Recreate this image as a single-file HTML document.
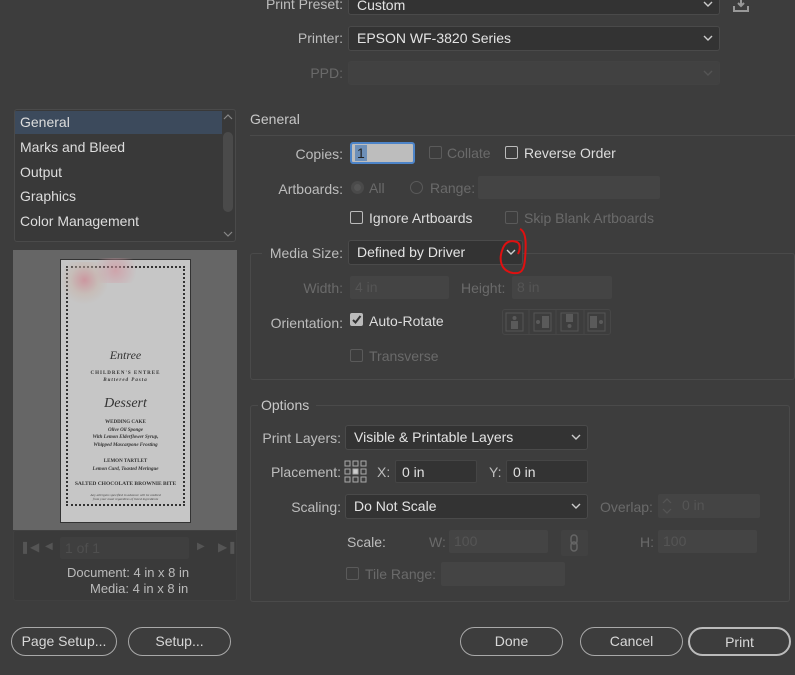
<!DOCTYPE html>
<html><head><meta charset="utf-8"><style>
*{margin:0;padding:0;box-sizing:border-box}
body{width:795px;height:675px;background:#3d3d3d;font-family:"Liberation Sans",sans-serif;font-size:14px;color:#d0d0d0;position:relative;overflow:hidden}
.a{position:absolute;white-space:nowrap}
.lbl{position:absolute;text-align:right;color:#bdbdbd;font-size:14px}
.dis{color:#6a6a6a}
.dd{position:absolute;background:#333;border:1px solid #4a4a4a;border-radius:3px;color:#e4e4e4;padding-left:8px;line-height:23px}
.dd svg{position:absolute;right:6px;top:8px}
.in{position:absolute;background:#333;border:1px solid #454545;border-radius:2px;color:#e0e0e0;padding-left:6px;line-height:22px}
.din{position:absolute;background:#444;border-radius:2px;color:#555;padding-left:5px;line-height:22px}
.cb{position:absolute;width:13px;height:13px;border:1px solid #bbb;border-radius:2px}
.cb.d{border-color:#5a5a5a}
.btn{position:absolute;height:29px;border:1.5px solid #a9a9a9;border-radius:15px;text-align:center;line-height:26px;color:#d8d8d8;font-size:14px}
.box{position:absolute;border:1px solid #4a4a4a;border-radius:3px}
</style></head><body>

<!-- top -->
<div class="lbl" style="left:240px;width:103px;top:-4px">Print Preset:</div>
<div class="dd" style="left:348px;top:-10px;width:372px;height:25px;line-height:28px">Custom<svg width="10" height="6" style="top:10px"><path d="M1 1l4 4 4-4" stroke="#ccc" stroke-width="1.4" fill="none"/></svg></div>
<svg class="a" style="left:733px;top:0" width="16" height="12"><path d="M8 0v6M5 3l3 3 3-3M1 6v5h14V6" stroke="#999" stroke-width="2" fill="none"/></svg>
<div class="lbl" style="left:240px;width:103px;top:30px">Printer:</div>
<div class="dd" style="left:348px;top:26px;width:372px;height:25px">EPSON WF-3820 Series<svg width="10" height="6"><path d="M1 1l4 4 4-4" stroke="#ccc" stroke-width="1.4" fill="none"/></svg></div>
<div class="lbl dis" style="left:240px;width:103px;top:65px">PPD:</div>
<div class="dd" style="left:348px;top:61px;width:372px;height:24px;background:#414141;border-color:#424242"><svg width="10" height="6"><path d="M1 1l4 4 4-4" stroke="#555" stroke-width="1.4" fill="none"/></svg></div>

<!-- left list -->
<div class="box" style="left:14px;top:109px;width:222px;height:133px;background:#393939;overflow:hidden">
 <div style="position:absolute;left:0;top:1px;width:207px;height:23px;background:#3c4a5c"></div>
 <div class="a" style="left:5px;top:4px;color:#ddd">General</div>
 <div class="a" style="left:5px;top:29px;color:#ddd">Marks and Bleed</div>
 <div class="a" style="left:5px;top:54px;color:#ddd">Output</div>
 <div class="a" style="left:5px;top:78px;color:#ddd">Graphics</div>
 <div class="a" style="left:5px;top:103px;color:#ddd">Color Management</div>
 <div class="a" style="left:5px;top:128px;color:#ddd">Advanced</div>
 <div style="position:absolute;left:208px;top:22px;width:10px;height:80px;background:#4a4a4a;border-radius:5px"></div>
 <svg class="a" style="left:208px;top:4px" width="10" height="6"><path d="M1 5l4-4 4 4" stroke="#888" stroke-width="1.2" fill="none"/></svg>
 <svg class="a" style="left:208px;top:121px" width="10" height="6"><path d="M1 1l4 4 4-4" stroke="#888" stroke-width="1.2" fill="none"/></svg>
</div>

<!-- preview -->
<div style="position:absolute;left:13px;top:250px;width:224px;height:280px;background:#666"></div>
<div style="position:absolute;left:60px;top:259px;width:131px;height:264px;background:#c6c6c6;border:1px solid #333"></div>
<div style="position:absolute;left:66px;top:266px;width:119px;height:240px;border:2px dotted #333"></div>
<div style="position:absolute;left:62px;top:262px;width:45px;height:45px;background:radial-gradient(circle at 50% 40%,rgba(205,140,150,.8) 0,rgba(200,180,170,.5) 40%,transparent 70%)"></div>
<div style="position:absolute;left:88px;top:258px;width:55px;height:25px;background:radial-gradient(circle,rgba(210,150,160,.7) 0,transparent 70%)"></div>
<div class="a" style="left:60px;width:131px;text-align:center;top:348px;font-family:'Liberation Serif',serif;font-style:italic;font-size:12px;color:#333">Entree</div>
<div class="a" style="left:60px;width:131px;text-align:center;top:370px;font-family:'Liberation Serif',serif;font-weight:bold;font-size:5px;line-height:7px;color:#333;letter-spacing:1px">CHILDREN'S ENTREE<br><i>Buttered Pasta</i></div>
<div class="a" style="left:60px;width:131px;text-align:center;top:396px;font-family:'Liberation Serif',serif;font-style:italic;font-size:14px;color:#333">Dessert</div>
<div class="a" style="left:60px;width:131px;text-align:center;top:419px;font-family:'Liberation Serif',serif;font-weight:bold;font-size:5px;line-height:7.5px;color:#333">WEDDING CAKE<br><i>Olive Oil Sponge<br>With Lemon Elderflower Syrup,<br>Whipped Mascarpone Frosting</i></div>
<div class="a" style="left:60px;width:131px;text-align:center;top:458px;font-family:'Liberation Serif',serif;font-weight:bold;font-size:5px;line-height:8px;color:#333">LEMON TARTLET<br><i>Lemon Curd, Toasted Meringue</i></div>
<div class="a" style="left:66px;width:119px;overflow:hidden;text-align:center;top:481px;font-family:'Liberation Serif',serif;font-weight:bold;font-size:5.5px;color:#333">SALTED CHOCOLATE BROWNIE BITE</div>
<div class="a" style="left:60px;width:131px;text-align:center;top:493px;font-family:'Liberation Serif',serif;font-style:italic;font-size:3.5px;color:#444">Any allergens specified in advance will be omitted<br>from your meal regardless of listed ingredients</div>

<div class="box" style="left:13px;top:530px;width:224px;height:71px;background:#3a3a3a;border-color:#404040"></div>
<div class="a" style="left:20px;top:540px;color:#555;font-size:12px">&#10074;&#9664;</div>
<div class="a" style="left:45px;top:541px;color:#555;font-size:10px">&#9664;</div>
<div class="din" style="left:60px;top:537px;width:129px;height:22px;background:#3f3f3f;color:#4f4f4f">1 of 1</div>
<div class="a" style="left:197px;top:541px;color:#555;font-size:10px">&#9654;</div>
<div class="a" style="left:218px;top:540px;color:#555;font-size:12px">&#9654;&#10074;</div>
<div class="a" style="left:67px;top:565px;font-size:13px;color:#bbb">Document: 4 in x 8 in</div>
<div class="a" style="left:90px;top:581px;font-size:13px;color:#bbb">Media: 4 in x 8 in</div>

<!-- General -->
<div class="a" style="left:250px;top:111px;color:#c8c8c8">General</div>
<div style="position:absolute;left:250px;top:135px;width:545px;height:1px;background:#4a4a4a"></div>
<div class="lbl" style="left:240px;width:103px;top:146px">Copies:</div>
<div style="position:absolute;left:350px;top:142px;width:65px;height:22px;background:#bdbdbd;border:2px solid #4d84c8;border-radius:3px"><span style="position:absolute;left:3px;top:1px;background:#6d8fb8;color:#222;padding:0 2px;line-height:16px">1</span></div>
<div class="cb d" style="left:429px;top:146px"></div><div class="a dis" style="left:447px;top:145px">Collate</div>
<div class="cb" style="left:505px;top:146px"></div><div class="a" style="left:524px;top:145px;color:#ddd">Reverse Order</div>

<div class="lbl" style="left:240px;width:103px;top:181px">Artboards:</div>
<div style="position:absolute;left:351px;top:181px;width:13px;height:13px;border-radius:50%;background:#555;border:3px solid #4a4a4a"></div>
<div class="a dis" style="left:369px;top:180px">All</div>
<div style="position:absolute;left:410px;top:181px;width:13px;height:13px;border-radius:50%;border:1px solid #5a5a5a"></div>
<div class="a dis" style="left:430px;top:180px">Range:</div>
<div class="din" style="left:478px;top:176px;width:182px;height:23px"></div>

<div class="cb" style="left:350px;top:211px"></div><div class="a" style="left:369px;top:210px;color:#ddd">Ignore Artboards</div>
<div class="cb d" style="left:505px;top:211px"></div><div class="a dis" style="left:524px;top:210px">Skip Blank Artboards</div>

<!-- media group -->
<div class="box" style="left:250px;top:253px;width:545px;height:127px"></div>
<div style="position:absolute;left:262px;top:245px;width:86px;height:16px;background:#3d3d3d"></div>
<div class="lbl" style="left:240px;width:103px;top:245px">Media Size:</div>
<div class="dd" style="left:348px;top:240px;width:175px;height:25px">Defined by Driver<svg width="10" height="6"><path d="M1 1l4 4 4-4" stroke="#ccc" stroke-width="1.4" fill="none"/></svg></div>
<div class="lbl dis" style="left:240px;width:103px;top:280px">Width:</div>
<div class="din" style="left:350px;top:276px;width:99px;height:23px">4 in</div>
<div class="a dis" style="left:461px;top:280px">Height:</div>
<div class="din" style="left:512px;top:276px;width:100px;height:23px">8 in</div>
<div class="lbl" style="left:240px;width:103px;top:315px">Orientation:</div>
<div class="cb" style="left:350px;top:313px;background:#bbb;border-color:#bbb"><svg width="11" height="11" style="position:absolute;left:0;top:0"><path d="M2 6l2.5 2.5L9.5 2" stroke="#333" stroke-width="2" fill="none"/></svg></div>
<div class="a" style="left:369px;top:313px;color:#ddd">Auto-Rotate</div>
<div class="box" style="left:502px;top:309px;width:109px;height:26px;border-color:#474747"></div>
<svg class="a" style="left:502px;top:309px" width="110" height="26" fill="#5a5a5a">
<rect x="4" y="4" width="17" height="18" fill="none" stroke="#555"/><rect x="9" y="12" width="7" height="8"/><circle cx="12.5" cy="9" r="2"/>
<line x1="27" y1="0" x2="27" y2="26" stroke="#474747"/>
<rect x="32" y="4" width="17" height="18" fill="none" stroke="#555"/><rect x="40" y="7" width="7" height="12"/><circle cx="36" cy="13" r="2"/>
<line x1="54" y1="0" x2="54" y2="26" stroke="#474747"/>
<rect x="59" y="4" width="17" height="18" fill="none" stroke="#555"/><rect x="64" y="5" width="7" height="8"/><circle cx="67.5" cy="17" r="2"/>
<line x1="82" y1="0" x2="82" y2="26" stroke="#474747"/>
<rect x="86" y="4" width="17" height="18" fill="none" stroke="#555"/><rect x="88" y="7" width="7" height="12"/><circle cx="99" cy="13" r="2"/>
</svg>
<div class="cb d" style="left:350px;top:349px"></div><div class="a dis" style="left:369px;top:348px">Transverse</div>

<!-- red annotation -->
<svg class="a" style="left:495px;top:225px" width="40" height="56"><path d="M25 4c7 3 6 18 5 30c-1 12-4 15-12 14c-12-2-15-13-10-25c3-7 8-8 14-6c4 2 3 8 1 12" stroke="#e01010" stroke-width="2" fill="none"/></svg>

<!-- options -->
<div class="box" style="left:250px;top:405px;width:540px;height:197px"></div>
<div style="position:absolute;left:258px;top:397px;width:58px;height:16px;background:#3d3d3d"></div>
<div class="a" style="left:261px;top:397px;color:#c8c8c8">Options</div>
<div class="lbl" style="left:240px;width:101px;top:430px">Print Layers:</div>
<div class="dd" style="left:345px;top:425px;width:243px;height:25px">Visible &amp; Printable Layers<svg width="10" height="6"><path d="M1 1l4 4 4-4" stroke="#ccc" stroke-width="1.4" fill="none"/></svg></div>
<div class="lbl" style="left:240px;width:101px;top:464px">Placement:</div>
<svg class="a" style="left:344px;top:460px" width="23" height="23" fill="none" stroke="#aaa" stroke-width="1"><rect x="1" y="1" width="5" height="5"/><rect x="9" y="1" width="5" height="5"/><rect x="17" y="1" width="5" height="5"/><rect x="1" y="9" width="5" height="5"/><rect x="9" y="9" width="5" height="5" fill="#ccc"/><rect x="17" y="9" width="5" height="5"/><rect x="1" y="17" width="5" height="5"/><rect x="9" y="17" width="5" height="5"/><rect x="17" y="17" width="5" height="5"/></svg>
<div class="a" style="left:377px;top:464px;color:#bdbdbd">X:</div>
<div class="in" style="left:395px;top:460px;width:82px;height:23px">0 in</div>
<div class="a" style="left:489px;top:464px;color:#bdbdbd">Y:</div>
<div class="in" style="left:506px;top:460px;width:82px;height:23px">0 in</div>
<div class="lbl" style="left:240px;width:101px;top:499px">Scaling:</div>
<div class="dd" style="left:345px;top:494px;width:243px;height:25px">Do Not Scale<svg width="10" height="6"><path d="M1 1l4 4 4-4" stroke="#ccc" stroke-width="1.4" fill="none"/></svg></div>
<div class="a dis" style="left:600px;top:499px">Overlap:</div>
<div class="din" style="left:658px;top:494px;width:102px;height:24px;padding-left:24px">0 in</div>
<svg class="a" style="left:662px;top:497px" width="10" height="18"><path d="M1 6l4-4 4 4M1 12l4 4 4-4" stroke="#555" stroke-width="1.2" fill="none"/></svg>
<div class="a" style="left:347px;top:534px;color:#bdbdbd">Scale:</div>
<div class="a dis" style="left:429px;top:534px">W:</div>
<div class="din" style="left:449px;top:530px;width:99px;height:23px">100</div>
<div class="din" style="left:561px;top:530px;width:27px;height:26px;background:#414141"></div>
<svg class="a" style="left:568px;top:534px" width="12" height="18" fill="none" stroke="#666" stroke-width="1.5"><rect x="3" y="1" width="6" height="9" rx="3"/><rect x="3" y="8" width="6" height="9" rx="3"/></svg>
<div class="a dis" style="left:640px;top:534px">H:</div>
<div class="din" style="left:658px;top:530px;width:99px;height:23px">100</div>
<div class="cb d" style="left:346px;top:567px"></div><div class="a dis" style="left:365px;top:566px">Tile Range:</div>
<div class="din" style="left:441px;top:562px;width:124px;height:24px"></div>

<!-- buttons -->
<div class="btn" style="left:11px;top:627px;width:106px">Page Setup...</div>
<div class="btn" style="left:128px;top:627px;width:103px">Setup...</div>
<div class="btn" style="left:460px;top:627px;width:103px">Done</div>
<div class="btn" style="left:580px;top:627px;width:103px">Cancel</div>
<div class="btn" style="left:688px;top:627px;width:103px;border-width:2px;border-color:#bbb">Print</div>
</body></html>
